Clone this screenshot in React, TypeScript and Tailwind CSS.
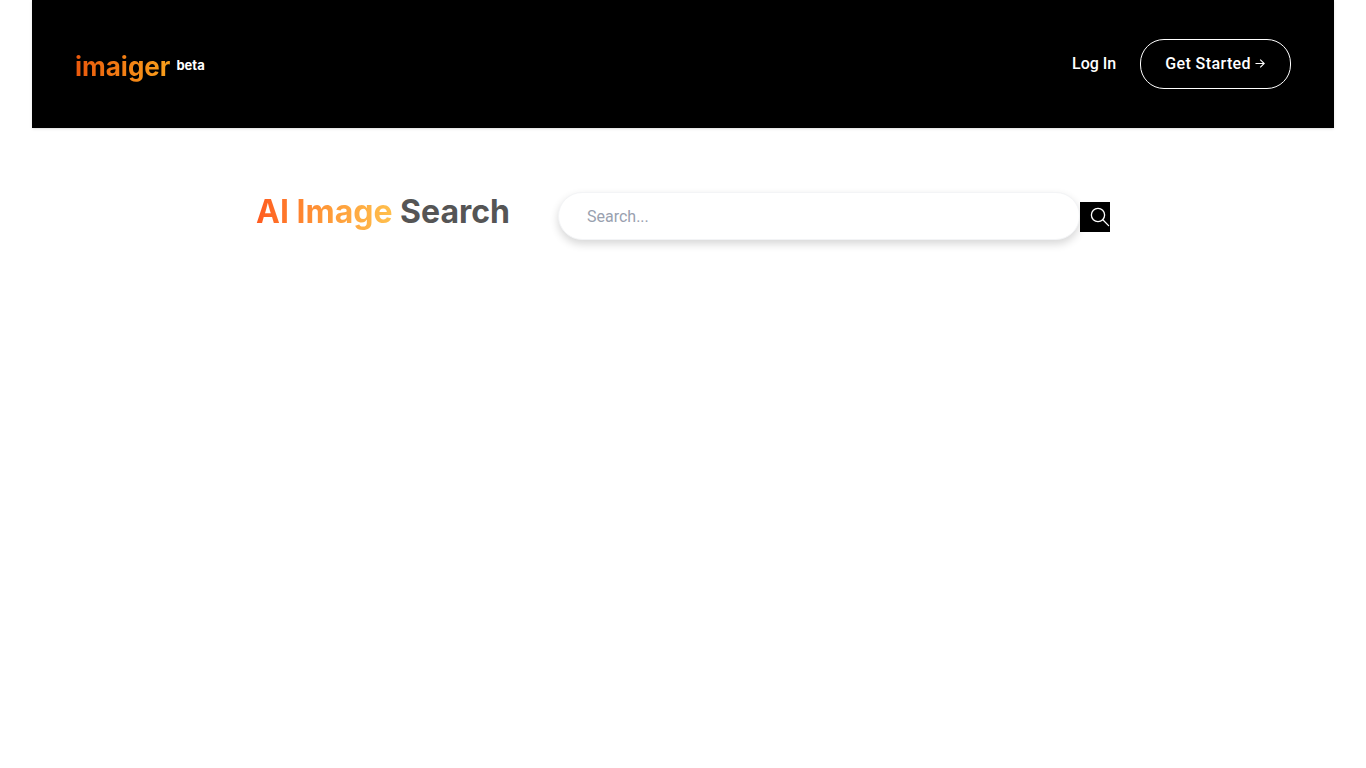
function ArrowIcon() {
  return (
    <svg className="h-3 w-[11px]" viewBox="0 0 11 12" fill="none" stroke="currentColor" strokeWidth="1.1" aria-hidden="true">
      <path d="M.5 5.5h8.6M5.2 1.6l4 3.9-4 3.9" />
    </svg>
  );
}

function SearchIcon() {
  return (
    <svg className="h-5 w-5 shrink-0" viewBox="0 0 20 20" fill="none" stroke="currentColor" strokeWidth="1.3" strokeLinecap="round" aria-hidden="true">
      <circle cx="8" cy="8" r="6.6" />
      <path d="m12.8 12.8 5.8 5.8" />
    </svg>
  );
}

function Header() {
  return (
    <header className="mx-8 bg-black text-white shadow-sm">
      <div className="mx-auto flex h-32 max-w-7xl items-center justify-between px-8">
        <a href="#" className="flex items-center gap-1.5 pt-1.5 font-['Inter',sans-serif] font-bold">
          <span className="bg-linear-to-r from-[#ea580c] to-[#f9a01b] bg-clip-text text-[26px] leading-9 text-transparent">
            imaiger
          </span>
          <span className="pb-0.5 text-[13px]">beta</span>
        </a>
        <nav className="flex items-center gap-6 font-medium">
          <a href="#">Log In</a>
          <a href="#" className="flex items-center gap-1 rounded-3xl border border-white px-6 py-3 tracking-wide">
            Get Started
            <ArrowIcon />
          </a>
        </nav>
      </div>
    </header>
  );
}

function SearchBar() {
  return (
    <form className="flex items-center" onSubmit={(e) => e.preventDefault()}>
      <input
        type="text"
        aria-label="Search"
        placeholder="Search..."
        className="h-12 w-[522px] rounded-3xl border border-gray-100 bg-white px-7 shadow-[0_4px_8px_rgba(0,0,0,0.16)] outline-none placeholder:text-gray-400"
      />
      <button type="submit" aria-label="Submit search" className="mt-0.5 flex h-[30px] w-[30px] items-center justify-end bg-black text-white">
        <SearchIcon />
      </button>
    </form>
  );
}

export default function App() {
  return (
    <div className="min-h-screen bg-white font-['Roboto',sans-serif] text-base">
      <Header />
      <main className="flex flex-wrap items-center justify-center gap-12 py-16">
        <h1 className="pb-2 font-['Inter',sans-serif] text-[32px] leading-10 font-bold text-[#555]">
          <span className="bg-linear-to-r from-[#ff5a1f] via-[#ff9838] to-[#ffc04d] bg-clip-text text-transparent">AI Image</span>{" "}
          Search
        </h1>
        <SearchBar />
      </main>
    </div>
  );
}
